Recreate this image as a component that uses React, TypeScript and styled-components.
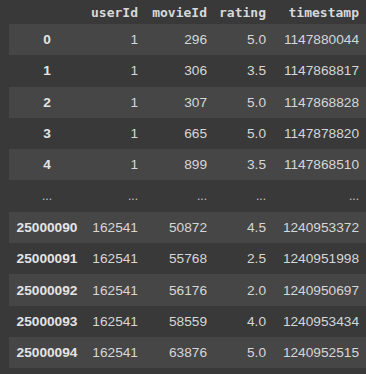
import React from "react";
import styled, { createGlobalStyle } from "styled-components";

const GlobalStyle = createGlobalStyle`
  html, body {
    margin: 0;
    padding: 0;
    background: #393939;
  }
`;

const Wrapper = styled.div`
  padding-left: 9px;
  width: 366px;
  height: 374px;
  box-sizing: border-box;
  overflow: hidden;
  background: #393939;
`;

const Table = styled.table`
  border-collapse: collapse;
  table-layout: fixed;
  width: 357px;
  color: #d6d6d6;
  font-family: "Liberation Sans", Arial, sans-serif;
  font-size: 13.7px;
`;

const HeadCell = styled.th`
  height: 24px;
  padding: 0 7px 0 0;
  text-align: right;
  font-family: "DejaVu Sans Mono", monospace;
  font-weight: bold;
  font-size: 13px;
  color: #d8d8d8;
  vertical-align: middle;
`;

const Row = styled.tr`
  height: 31.3px;
  &:nth-child(odd) {
    background: #464646;
  }
`;

const IndexCell = styled.th<{ $muted?: boolean }>`
  padding: 0;
  text-align: center;
  font-weight: ${(p) => (p.$muted ? "normal" : "bold")};
  font-size: ${(p) => (p.$muted ? "12px" : "13.7px")};
  color: ${(p) => (p.$muted ? "#c8c8c8" : "#e4e4e4")};
`;

const Cell = styled.td<{ $muted?: boolean }>`
  padding: 0 7px 0 0;
  text-align: right;
  white-space: nowrap;
  font-size: ${(p) => (p.$muted ? "12px" : "13.7px")};
  color: ${(p) => (p.$muted ? "#c8c8c8" : "#d6d6d6")};
`;

const widths = [76, 60, 69, 59, 93];
const columns = ["userId", "movieId", "rating", "timestamp"];

const rows: (string | number)[][] = [
  ["0", 1, 296, "5.0", 1147880044],
  ["1", 1, 306, "3.5", 1147868817],
  ["2", 1, 307, "5.0", 1147868828],
  ["3", 1, 665, "5.0", 1147878820],
  ["4", 1, 899, "3.5", 1147868510],
  ["...", "...", "...", "...", "..."],
  ["25000090", 162541, 50872, "4.5", 1240953372],
  ["25000091", 162541, 55768, "2.5", 1240951998],
  ["25000092", 162541, 56176, "2.0", 1240950697],
  ["25000093", 162541, 58559, "4.0", 1240953434],
  ["25000094", 162541, 63876, "5.0", 1240952515],
];

export default function App() {
  return (
    <>
      <GlobalStyle />
      <Wrapper>
        <Table>
          <colgroup>
            {widths.map((w, i) => (
              <col key={i} style={{ width: w }} />
            ))}
          </colgroup>
          <thead>
            <tr>
              <HeadCell />
              {columns.map((c) => (
                <HeadCell key={c}>{c}</HeadCell>
              ))}
            </tr>
          </thead>
          <tbody>
            {rows.map(([idx, ...vals]) => {
              const muted = idx === "...";
              return (
                <Row key={String(idx)}>
                  <IndexCell $muted={muted}>{idx}</IndexCell>
                  {vals.map((v, i) => (
                    <Cell key={i} $muted={muted}>
                      {v}
                    </Cell>
                  ))}
                </Row>
              );
            })}
          </tbody>
        </Table>
      </Wrapper>
    </>
  );
}
